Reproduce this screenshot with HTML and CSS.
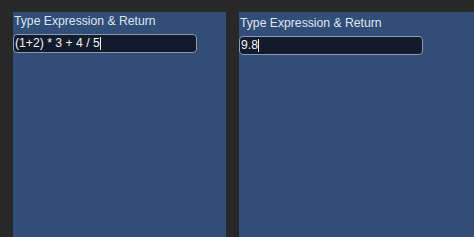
FILE: index.html
```html
<!DOCTYPE html>
<html lang="en">
<head>
   <title>Expression Calculator</title>
   <link rel="stylesheet" href="styles.css">
</head>
<body>
   <div class="screens">
      <!-- Before pressing Return -->
      <div class="panel">
         <div class="label">Type Expression &amp; Return</div>
         <div class="field">(1+2) * 3 + 4 / 5<span class="caret"></span></div>
      </div>

      <!-- After pressing Return -->
      <div class="panel panel-result">
         <div class="label">Type Expression &amp; Return</div>
         <div class="field">9.8<span class="caret"></span></div>
      </div>
   </div>
</body>
</html>
```

FILE: styles.css
```css
* {
   margin: 0;
   padding: 0;
   box-sizing: border-box;
}

body {
   background: #282828;
   font-family: 'Liberation Sans', Arial, sans-serif;
   width: 474px;
   height: 237px;
   overflow: hidden;
}

.screens {
   display: flex;
   gap: 13px;
   height: 237px;
   padding: 12px 0 0 13px;
}

.panel {
   width: 213px;
   background: #314e79;
   padding-top: 2px;
}

.panel-result {
   flex: 1;
   padding-top: 4px;
}

.label {
   color: #dfe5ee;
   font-size: 12.2px;
   line-height: 15px;
   padding-left: 1px;
}

.field {
   width: 184px;
   height: 19px;
   margin-top: 5px;
   background: #111b2c;
   border: 1px solid #8d9ab0;
   border-radius: 4px;
   color: #f2f4f8;
   font-size: 12.2px;
   line-height: 17px;
   padding-left: 1px;
   display: flex;
   align-items: center;
}

.caret {
   display: inline-block;
   width: 1px;
   height: 13px;
   background: #f2f4f8;
}
```
